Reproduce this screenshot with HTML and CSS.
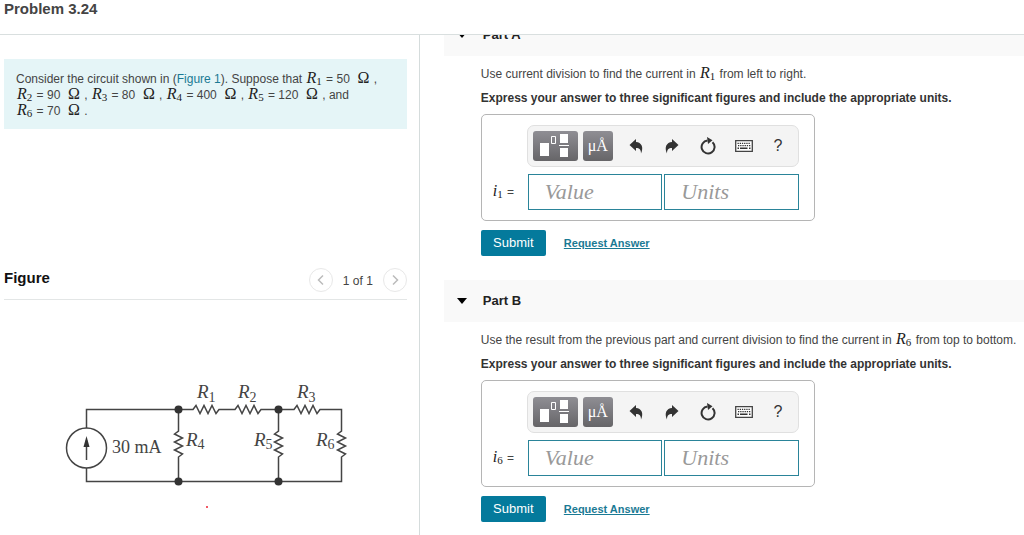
FILE: index.html
```html
<!DOCTYPE html>
<html lang="en">
<head>
<meta charset="utf-8">
<title>Problem 3.24</title>
<link rel="stylesheet" href="styles.css">
</head>
<body>
<svg class="defs" aria-hidden="true">
  <symbol id="template" viewBox="0 0 45 30">
    <path fill="#fff" d="M7 12h9v13H7zM27 3h8v9h-8zM27 17h8v9h-8zM26 14h10v1H26z"/>
    <path fill="none" stroke="#fff" d="M18.500 5.500h4v7h-4z"/>
  </symbol>
  <symbol id="undo" viewBox="0 0 16 16">
    <path fill="#333" d="M1.500 7 8 1v3C13.500 4.500 16 9 13 15.500 13 11.500 11.500 10 8 10v3z"/>
  </symbol>
  <symbol id="redo" viewBox="0 0 16 16">
    <path fill="#333" d="M14.500 7 8 1v3C2.500 4.500 0 9 3 15.500 3 11.500 4.500 10 8 10v3z"/>
  </symbol>
  <symbol id="reset" viewBox="0 0 18 18">
    <path fill="none" stroke="#333" stroke-width="2" d="M13.500 5.200A6.500 6.500 0 1 1 8.500 3.500"/>
    <path fill="#333" d="M8 0l5.500 3.300L9 7z"/>
  </symbol>
  <symbol id="keyboard" viewBox="0 0 18 12">
    <path fill="#fff" stroke="#444" stroke-width="1.300" d="M.7.7h16.600v10.600H.7z"/>
    <path stroke="#333" stroke-width="1.300" stroke-dasharray="1.300 .9" d="M2.500 3.300h13M3 5.600h12.500"/>
    <path stroke="#333" stroke-width="1.400" d="M2.500 8.300h1.500M5 8.300h7.500M14 8.300h1.500"/>
  </symbol>
</svg>

<header class="page-header"><h1>Problem 3.24</h1></header>
<main class="columns">
  <section class="left">
    <p class="intro">Consider the circuit shown in (<a href="#figure">Figure 1</a>). Suppose that <span class="nowrap"><span class="math"><i>R</i><sub>1</sub></span> = 50 &nbsp;<span class="math">Ω</span>&nbsp;,</span> <span class="nowrap"><span class="math"><i>R</i><sub>2</sub></span> = 90 &nbsp;<span class="math">Ω</span>&nbsp;,</span> <span class="nowrap"><span class="math"><i>R</i><sub>3</sub></span> = 80 &nbsp;<span class="math">Ω</span>&nbsp;,</span> <span class="nowrap"><span class="math"><i>R</i><sub>4</sub></span> = 400 &nbsp;<span class="math">Ω</span>&nbsp;,</span> <span class="nowrap"><span class="math"><i>R</i><sub>5</sub></span> = 120 &nbsp;<span class="math">Ω</span>&nbsp;,</span> and <span class="nowrap"><span class="math"><i>R</i><sub>6</sub></span> = 70 &nbsp;<span class="math">Ω</span>&nbsp;.</span></p>
    <div class="figure-bar">
      <h2>Figure</h2>
      <div class="pager">
        <button type="button" aria-label="Previous figure"><svg viewBox="0 0 10 12"><path d="M7 1.500 2.500 6 7 10.500"/></svg></button>
        <span>1 of 1</span>
        <button type="button" aria-label="Next figure"><svg viewBox="0 0 10 12"><path d="M3 1.500 7.500 6 3 10.500"/></svg></button>
      </div>
    </div>
    <figure class="figure" id="figure">
      <svg class="circuit" viewBox="50 370 310 150" role="img" aria-label="Current source with six resistors">
        <g class="wire">
          <path d="M86.500 428V409.500H193l3-4 4 8 4-8 4 8 4-8 4 8 3-4H235l3-4 4 8 4-8 4 8 4-8 4 8 3-4H294l3-4 4 8 4-8 4 8 4-8 4 8 3-4H341.500V431l-4 3 8 4-8 4 8 4-8 4 8 4-4 3V481.500H86.500V468"/>
          <path d="M178.500 409.500V431l-4 3 8 4-8 4 8 4-8 4 8 4-4 3V481.500"/>
          <path d="M278.500 409.500V431l-4 3 8 4-8 4 8 4-8 4 8 4-4 3V481.500"/>
          <circle cx="86.500" cy="448" r="20"/>
          <path d="M86.500 460V440"/>
        </g>
        <path class="dot" d="M86.500 436l3 11h-6z"/>
        <g class="dot"><circle cx="178.500" cy="409.500" r="4"/><circle cx="278.500" cy="409.500" r="4"/><circle cx="178.500" cy="481.500" r="4"/><circle cx="278.500" cy="481.500" r="4"/></g>
        <circle cx="207" cy="507" r="1" fill="#e23"/>
        <g class="label">
          <text x="197" y="398"><tspan class="it">R</tspan><tspan class="sub" dy="4">1</tspan></text>
          <text x="238" y="398"><tspan class="it">R</tspan><tspan class="sub" dy="4">2</tspan></text>
          <text x="297" y="398"><tspan class="it">R</tspan><tspan class="sub" dy="4">3</tspan></text>
          <text x="186" y="446"><tspan class="it">R</tspan><tspan class="sub" dy="3">4</tspan></text>
          <text x="254" y="446"><tspan class="it">R</tspan><tspan class="sub" dy="3">5</tspan></text>
          <text x="316" y="446"><tspan class="it">R</tspan><tspan class="sub" dy="3">6</tspan></text>
          <text class="source" x="112" y="453">30 mA</text>
        </g>
      </svg>
    </figure>
  </section>

  <section class="right">
    <article class="part">
      <h2><button type="button" class="part-head" aria-expanded="true"><svg viewBox="0 0 10 6"><path d="M0 0h10L5 6z"/></svg>Part A</button></h2>
      <form class="part-body">
        <p>Use current division to find the current in <span class="math"><i>R</i><sub>1</sub></span> from left to right.</p>
        <p class="bold">Express your answer to three significant figures and include the appropriate units.</p>
        <div class="answer">
          <div class="toolbar">
            <button type="button" class="tool wide" aria-label="Templates"><svg><use href="#template"/></svg></button>
            <button type="button" class="tool units">μÅ</button>
            <div class="actions">
              <button type="button" aria-label="Undo"><svg class="arrow"><use href="#undo"/></svg></button>
              <button type="button" aria-label="Redo"><svg class="arrow"><use href="#redo"/></svg></button>
              <button type="button" aria-label="Reset"><svg class="reset"><use href="#reset"/></svg></button>
              <button type="button" aria-label="Keyboard shortcuts"><svg class="keys"><use href="#keyboard"/></svg></button>
              <button type="button" class="help">?</button>
            </div>
          </div>
          <label for="value-a"><span class="math"><i>i</i><sub>1</sub></span> =</label>
          <div class="fields">
            <input id="value-a" type="text" placeholder="Value">
            <input type="text" placeholder="Units" aria-label="Units">
          </div>
        </div>
        <div class="submit-row"><button type="submit">Submit</button><a href="#answer-a">Request Answer</a></div>
      </form>
    </article>

    <article class="part">
      <h2><button type="button" class="part-head" aria-expanded="true"><svg viewBox="0 0 10 6"><path d="M0 0h10L5 6z"/></svg>Part B</button></h2>
      <form class="part-body">
        <p>Use the result from the previous part and current division to find the current in <span class="math"><i>R</i><sub>6</sub></span> from top to bottom.</p>
        <p class="bold">Express your answer to three significant figures and include the appropriate units.</p>
        <div class="answer">
          <div class="toolbar">
            <button type="button" class="tool wide" aria-label="Templates"><svg><use href="#template"/></svg></button>
            <button type="button" class="tool units">μÅ</button>
            <div class="actions">
              <button type="button" aria-label="Undo"><svg class="arrow"><use href="#undo"/></svg></button>
              <button type="button" aria-label="Redo"><svg class="arrow"><use href="#redo"/></svg></button>
              <button type="button" aria-label="Reset"><svg class="reset"><use href="#reset"/></svg></button>
              <button type="button" aria-label="Keyboard shortcuts"><svg class="keys"><use href="#keyboard"/></svg></button>
              <button type="button" class="help">?</button>
            </div>
          </div>
          <label for="value-b"><span class="math"><i>i</i><sub>6</sub></span> =</label>
          <div class="fields">
            <input id="value-b" type="text" placeholder="Value">
            <input type="text" placeholder="Units" aria-label="Units">
          </div>
        </div>
        <div class="submit-row"><button type="submit">Submit</button><a href="#answer-b">Request Answer</a></div>
      </form>
    </article>
  </section>
</main>
</body>
</html>
```
FILE: styles.css
```css
* { box-sizing: border-box; }
body {
  margin: 0;
  height: 100vh;
  display: flex;
  flex-direction: column;
  overflow: hidden;
  background: #fff;
  color: #444;
  font: 12px/16px "Liberation Sans", Arial, sans-serif;
}
h1, h2, p, figure { margin: 0; }
button { font: inherit; padding: 0; border: 0; background: none; cursor: pointer; }
svg { display: block; }
a { color: #1a7a94; }
.defs { display: none; }

.page-header { flex: none; padding: 0 4px 16px; border-bottom: 1px solid #d9dfdf; }
h1 { font-size: 15px; line-height: 18px; }

.columns { flex: 1; min-height: 0; display: grid; grid-template-columns: 41% 59%; }
.left { padding: 24px 12px 0 4px; border-right: 1px solid #d5dcdc; overflow: hidden; }
.intro { padding: 12px 24px 10px 12px; background: #e5f5f7; }
.intro a { text-decoration: none; }
.nowrap { white-space: nowrap; }

.math { padding: 0 1px; font-family: "Liberation Serif", "Times New Roman", serif; font-size: 16px; line-height: 0; color: #222; }
.math sub { font-size: 11px; line-height: 0; vertical-align: -2px; }

.figure-bar { display: flex; justify-content: space-between; align-items: center; margin-top: 139px; padding-bottom: 7px; border-bottom: 1px solid #e3e6e6; }
.figure-bar h2 { color: #111; font-size: 15px; line-height: 18px; padding-bottom: 4px; }
.pager { display: flex; align-items: center; gap: 10px; }
.pager span { padding-top: 2px; }
.pager button { width: 24px; height: 24px; display: grid; place-items: center; border: 1px solid #e8e8e8; border-radius: 50%; }
.pager svg { width: 10px; height: 12px; fill: none; stroke: #bbb; stroke-width: 1.500; }
.figure { padding: 70px 0 0 46px; }
.circuit { width: 310px; height: 150px; }
.wire { fill: none; stroke: #444; stroke-width: 1.500; }
.dot { fill: #333; }
.label { font-family: "Liberation Serif", serif; font-size: 19px; fill: #444; }
.it { font-style: italic; }
.sub { font-size: 14px; }
.source { font-size: 18px; }

.right { padding-left: 24px; overflow: hidden; display: flex; flex-direction: column; }
.part { flex: none; }
.part:first-child { margin-top: -21px; }
.part h2 { font-size: 13px; }
.part-head { width: 100%; height: 42px; display: flex; align-items: center; gap: 16px; padding-left: 13px; background: #f9f9f9; color: #222; text-align: left; }
.part-head svg { width: 10px; height: 6px; }
.part-body { display: flex; flex-direction: column; align-items: flex-start; padding: 10px 0 24px 37px; }
.part-body p { margin-bottom: 8px; white-space: nowrap; }
.bold { font-weight: bold; color: #333; }

.answer { display: grid; grid-template-columns: 35px 272px; row-gap: 7px; align-items: center; padding: 10px 15px 10px 10px; border: 1px solid #b5b5b5; border-radius: 5px; }
.toolbar { grid-column: 2; height: 42px; display: flex; align-items: center; gap: 5px; padding-left: 5px; background: #f4f4f4; border: 1px solid #e0e0e0; border-radius: 7px; }
.tool { width: 30px; height: 30px; border-radius: 3px; background: linear-gradient(#8f8e94, #666568); color: #fff; }
.wide { width: 45px; }
.wide svg { width: 45px; height: 30px; }
.units { font-family: "Liberation Serif", serif; font-size: 16px; }
.actions { display: flex; }
.actions button { width: 36px; height: 30px; display: grid; place-items: center; color: #333; }
.actions .help { width: 32px; font-size: 16px; }
.arrow { width: 16px; height: 16px; }
.reset { width: 18px; height: 18px; }
.keys { width: 18px; height: 12px; }
.fields { display: flex; gap: 2px; padding-left: 1px; }
.fields input { flex: 1; min-width: 0; height: 36px; padding: 0 16px; border: 1px solid #2a8499; border-radius: 0; background: #fff; color: #333; font: italic 22px/30px "Liberation Serif", serif; }
.fields input::placeholder { color: #999; opacity: 1; }

.submit-row { display: flex; align-items: center; gap: 18px; margin-top: 9px; }
.submit-row button { width: 65px; height: 26px; border-radius: 2px; background: #047a9c; color: #fff; font-size: 13px; }
.submit-row a { font-size: 11px; font-weight: bold; }
```
